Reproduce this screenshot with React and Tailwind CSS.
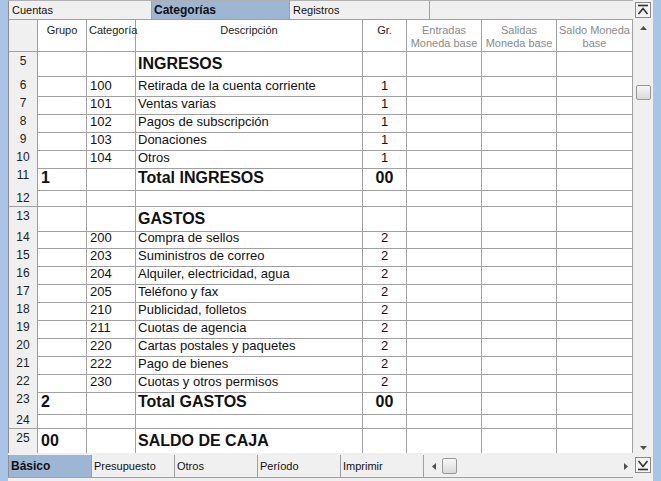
import React from 'react';

const rows = [
  { n: 5, h: 'h-[24px]', desc: 'INGRESOS', bold: true },
  { n: 6, h: 'h-[18px]', cat: '100', desc: 'Retirada de la cuenta corriente', gr: '1' },
  { n: 7, h: 'h-[18px]', cat: '101', desc: 'Ventas varias', gr: '1' },
  { n: 8, h: 'h-[18px]', cat: '102', desc: 'Pagos de subscripción', gr: '1' },
  { n: 9, h: 'h-[18px]', cat: '103', desc: 'Donaciones', gr: '1' },
  { n: 10, h: 'h-[18px]', cat: '104', desc: 'Otros', gr: '1' },
  { n: 11, h: 'h-[23px]', grupo: '1', desc: 'Total INGRESOS', gr: '00', bold: true },
  { n: 12, h: 'h-[18px]' },
  { n: 13, h: 'h-[21px]', desc: 'GASTOS', bold: true },
  { n: 14, h: 'h-[18px]', cat: '200', desc: 'Compra de sellos', gr: '2' },
  { n: 15, h: 'h-[18px]', cat: '203', desc: 'Suministros de correo', gr: '2' },
  { n: 16, h: 'h-[18px]', cat: '204', desc: 'Alquiler, electricidad, agua', gr: '2' },
  { n: 17, h: 'h-[18px]', cat: '205', desc: 'Teléfono y fax', gr: '2' },
  { n: 18, h: 'h-[18px]', cat: '210', desc: 'Publicidad, folletos', gr: '2' },
  { n: 19, h: 'h-[18px]', cat: '211', desc: 'Cuotas de agencia', gr: '2' },
  { n: 20, h: 'h-[18px]', cat: '220', desc: 'Cartas postales y paquetes', gr: '2' },
  { n: 21, h: 'h-[18px]', cat: '222', desc: 'Pago de bienes', gr: '2' },
  { n: 22, h: 'h-[18px]', cat: '230', desc: 'Cuotas y otros permisos', gr: '2' },
  { n: 23, h: 'h-[21px]', grupo: '2', desc: 'Total GASTOS', gr: '00', bold: true },
  { n: 24, h: 'h-[18px]' },
  { n: 25, h: 'h-[22px]', grupo: '00', desc: 'SALDO DE CAJA', bold: true },
  { n: '', h: 'h-[18px]' },
];

const cols = 'grid grid-cols-[29px_49px_49px_227px_44px_75px_75px_76px]';
const cell = 'border-r border-b border-[#a0a0a0]';

function Tri({ dir }) {
  const pts = {
    up: '0,4 3.5,0 7,4',
    down: '0,0 3.5,4 7,0',
    left: '4,0 0,3.5 4,7',
    right: '0,0 4,3.5 0,7',
  }[dir];
  const vertical = dir === 'up' || dir === 'down';
  return (
    <svg width={vertical ? 7 : 4} height={vertical ? 4 : 7}>
      <polygon points={pts} fill="#505050" />
    </svg>
  );
}

function EndButton({ top }) {
  return (
    <div className="w-[16px] h-[16px] border border-[#8a8a8a] bg-[#f4f4f4] flex items-center justify-center">
      <svg width="12" height="12" viewBox="0 0 12 12">
        {top ? (
          <g stroke="#303030" strokeWidth="1.6" fill="none">
            <line x1="1" y1="1.5" x2="11" y2="1.5" />
            <polyline points="1.5,10 6,4.5 10.5,10" />
          </g>
        ) : (
          <g stroke="#303030" strokeWidth="1.6" fill="none">
            <polyline points="1.5,2 6,7.5 10.5,2" />
            <line x1="1" y1="10.5" x2="11" y2="10.5" />
          </g>
        )}
      </svg>
    </div>
  );
}

function Thumb({ className }) {
  return (
    <div
      className={`rounded-[2px] border border-[#979797] bg-gradient-to-b from-[#f7f7f7] to-[#d9d9d9] ${className}`}
    />
  );
}

function Row({ r }) {
  const b = r.bold ? 'font-bold text-[16px]' : 'text-[13px]';
  return (
    <div className={`${cols} ${r.h} text-[#111]`}>
      <div className={`${cell} bg-[#f0f0f0] text-[12px] text-center pt-[2px] leading-[14px] text-[#222]`}>{r.n}</div>
      <div className={`${cell} ${b} flex items-center pl-[3px] whitespace-nowrap`}>{r.grupo}</div>
      <div className={`${cell} text-[13px] flex items-center pl-[3px]`}>{r.cat}</div>
      <div className={`${cell} ${b} flex items-center pl-[2px] whitespace-nowrap`}>{r.desc}</div>
      <div className={`${cell} ${b} flex items-center justify-center`}>{r.gr}</div>
      <div className={cell} />
      <div className={cell} />
      <div className={cell} />
    </div>
  );
}

export default function App() {
  return (
    <div className="flex w-[661px] h-[481px] overflow-hidden bg-[#f0f0f0] font-['Liberation_Sans',Arial,sans-serif]">
      <div className="w-[8px] shrink-0 bg-[#a9c5e6]" />

      <div className="flex flex-col w-[625px] shrink-0">
        {/* top tabs */}
        <div className="flex h-[20px] border-t border-[#b0b0b0] text-[11px] text-[#111]">
          <div className="w-[1px] bg-[#8d8d8d]" />
          <div className="w-[143px] border-r border-b border-[#a0a0a0] pl-[3px] flex items-center">Cuentas</div>
          <div className="w-[138px] border-r border-b border-[#a0a0a0] bg-[#9db6d3] pl-[2px] flex items-center font-bold text-[12px]">Categorías</div>
          <div className="w-[140px] border-r border-b border-[#a0a0a0] pl-[3px] flex items-center">Registros</div>
          <div className="flex-1 border-b border-[#a0a0a0]" />
        </div>

        {/* grid */}
        <div className="h-[433px] overflow-hidden bg-white border-l border-[#8d8d8d]">
          <div className={`${cols} h-[32px] text-[11px] leading-[13px]`}>
            <div className={`${cell} bg-[#f0f0f0]`} />
            <div className={`${cell} text-center pt-[4px] text-[#222]`}>Grupo</div>
            <div className={`${cell} pl-[2px] pt-[4px] text-[#222] whitespace-nowrap`}>Categoría</div>
            <div className={`${cell} text-center pt-[4px] text-[#222]`}>Descripción</div>
            <div className={`${cell} text-center pt-[4px] text-[#222]`}>Gr.</div>
            <div className={`${cell} text-center pt-[4px] text-[#8a8a8a]`}>Entradas<br />Moneda base</div>
            <div className={`${cell} text-center pt-[4px] text-[#8a8a8a]`}>Salidas<br />Moneda base</div>
            <div className={`${cell} text-center pt-[4px] text-[#8a8a8a]`}>Saldo Moneda<br />base</div>
          </div>
          {rows.map((r, i) => (
            <Row key={i} r={r} />
          ))}
        </div>

        {/* bottom tabs + horizontal scroll */}
        <div className="flex h-[24px] pt-[2px] text-[11px] text-[#111]">
          <div className="w-[1px] bg-[#8d8d8d]" />
          <div className="w-[83px] border-r border-[#a0a0a0] bg-[#9db6d3] pl-[2px] flex items-center font-bold text-[12px]">Básico</div>
          <div className="w-[83px] border-r border-[#a0a0a0] pl-[2px] flex items-center">Presupuesto</div>
          <div className="w-[83px] border-r border-[#a0a0a0] pl-[2px] flex items-center">Otros</div>
          <div className="w-[83px] border-r border-[#a0a0a0] pl-[2px] flex items-center">Período</div>
          <div className="w-[83px] border-r border-[#a0a0a0] pl-[2px] flex items-center">Imprimir</div>
          <div className="flex-1 flex items-center pl-[8px] pr-[5px]">
            <Tri dir="left" />
            <Thumb className="ml-[6px] w-[15px] h-[16px]" />
            <div className="flex-1" />
            <Tri dir="right" />
          </div>
        </div>
        <div className="h-[4px] border-t border-[#a0a0a0] bg-[#f0f0f0]" />
      </div>

      {/* vertical scroll column */}
      <div className="w-[20px] shrink-0 flex flex-col items-center pt-[2px]">
        <EndButton top />
        <div className="mt-[8px]">
          <Tri dir="up" />
        </div>
        <Thumb className="mt-[55px] w-[15px] h-[15px]" />
        <div className="flex-1" />
        <Tri dir="down" />
        <div className="h-[7px]" />
        <EndButton />
        <div className="h-[8px]" />
      </div>

      <div className="w-[8px] shrink-0 bg-[#a9c5e6]" />
    </div>
  );
}
